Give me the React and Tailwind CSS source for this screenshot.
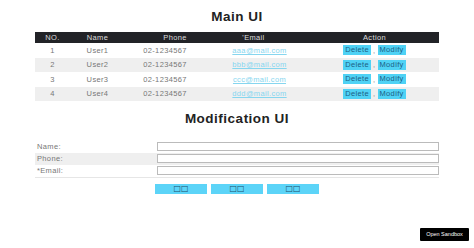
import React from 'react';

const users = [
    { no: 1, name: 'User1', phone: '02-1234567', email: 'aaa@mail.com' },
    { no: 2, name: 'User2', phone: '02-1234567', email: 'bbb@mail.com' },
    { no: 3, name: 'User3', phone: '02-1234567', email: 'ccc@mail.com' },
    { no: 4, name: 'User4', phone: '02-1234567', email: 'ddd@mail.com' },
];

const cols = 'grid grid-cols-[35px_55px_100px_85px_129px]';

const App = () => {
    return (
        <div className="relative w-[474px] h-[248px] bg-white font-['Liberation_Sans',Arial,sans-serif] overflow-hidden">
            <h1 className="pt-[7px] h-[32px] text-center text-[13.5px] font-bold tracking-[0.5px] text-[#222]">Main UI</h1>

            {/* user table */}
            <div className="ml-[35px] w-[404px] text-[7.5px] tracking-[0.35px]">
                <div className={`${cols} h-[11px] items-center bg-[#222327] text-[#dcdcdc]`}>
                    <div className="text-center">NO.</div>
                    <div className="text-center">Name</div>
                    <div className="text-center">Phone</div>
                    <div className="text-center pr-[28px]">'Email</div>
                    <div className="text-center">Action</div>
                </div>
                {users.map((u, i) => (
                    <div key={u.no} className={`${cols} h-[14.5px] items-center text-[#777] ${i % 2 === 1 ? 'bg-[#efefef]' : 'bg-white'}`}>
                        <div className="text-center">{u.no}</div>
                        <div className="text-center">{u.name}</div>
                        <div className="text-center pr-[20px]">{u.phone}</div>
                        <div className="text-center pr-[16px]">
                            <span className="text-[#86d6ef] underline">{u.email}</span>
                        </div>
                        <div className="flex items-center justify-center gap-[2px]">
                            <span className="bg-[#4fd2f5] text-[#1d5f86] px-[2px] leading-[10px]">Delete</span>
                            <span className="text-[#888]">,</span>
                            <span className="bg-[#4fd2f5] text-[#1d5f86] px-[2px] leading-[10px]">Modify</span>
                        </div>
                    </div>
                ))}
            </div>

            <h2 className="mt-[8px] h-[31px] text-center text-[13.5px] font-bold tracking-[0.5px] text-[#222]">Modification UI</h2>

            {/* form */}
            <div className="ml-[35px] w-[404px] text-[7.5px] tracking-[0.35px] text-[#777]">
                {['Name:', 'Phone:', '*Email:'].map((label, i) => (
                    <div key={label} className={`grid grid-cols-[122px_282px] h-[12.5px] items-center ${i === 1 ? 'bg-[#efefef]' : ''} ${i === 2 ? 'border-b border-[#e6e6e6]' : ''}`}>
                        <div className="pl-[2px]">{label}</div>
                        <div className="h-[9px] border border-[#bbb] bg-white"></div>
                    </div>
                ))}
            </div>

            <div className="mt-[6px] ml-[155px] flex gap-[4px]">
                {[0, 1, 2].map((k) => (
                    <button key={k} className="w-[52px] h-[10px] bg-[#5cd4f8] text-[#1d4f6a] text-[8px] leading-[10px] font-['DejaVu_Sans',sans-serif]">□□</button>
                ))}
            </div>

            <button className="absolute left-[420px] top-[228px] w-[49px] h-[13px] bg-black text-white text-[5.5px] rounded-[1px]">Open Sandbox</button>
        </div>
    );
};

export default App;
